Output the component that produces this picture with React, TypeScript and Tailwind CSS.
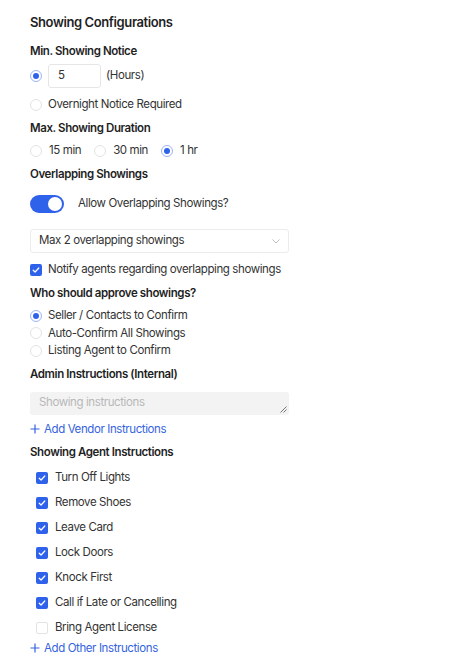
import { useState } from "react";

const font = { fontFamily: "Inter, 'Noto Sans', sans-serif" };

function Radio({ checked }: { checked: boolean }) {
  return checked ? (
    <span className="flex h-[12px] w-[12px] shrink-0 items-center justify-center rounded-full border border-[#9db3f5] bg-white">
      <span className="h-[6px] w-[6px] rounded-full bg-[#2f62eb]" />
    </span>
  ) : (
    <span className="h-[12px] w-[12px] shrink-0 rounded-full border border-[#e3e3e3] bg-white" />
  );
}

function Check({ checked }: { checked: boolean }) {
  return checked ? (
    <span className="flex h-[12px] w-[12px] shrink-0 items-center justify-center rounded-[2px] bg-[#2f62eb]">
      <svg width="8" height="8" viewBox="0 0 8 8" fill="none">
        <path d="M1.2 4.2 3.1 6 6.8 2" stroke="white" strokeWidth="1.2" strokeLinecap="round" strokeLinejoin="round" />
      </svg>
    </span>
  ) : (
    <span className="h-[12px] w-[12px] shrink-0 rounded-[2px] border border-[#e3e3e3] bg-white" />
  );
}

function Label({ children, className = "" }: { children: React.ReactNode; className?: string }) {
  return (
    <div className={`h-[16px] text-[11.5px] font-semibold leading-[16px] text-[#1f1f1f] ${className}`}>
      {children}
    </div>
  );
}

function AddLink({ text, className = "" }: { text: string; className?: string }) {
  return (
    <div className={`flex h-[16px] items-center gap-[4px] text-[11.5px] leading-[16px] text-[#3563e0] ${className}`}>
      <svg width="10" height="10" viewBox="0 0 10 10" fill="none">
        <path d="M5 0.5v9M0.5 5h9" stroke="#3563e0" strokeWidth="1.2" />
      </svg>
      <span>{text}</span>
    </div>
  );
}

const agentItems = [
  { label: "Turn Off Lights", checked: true },
  { label: "Remove Shoes", checked: true },
  { label: "Leave Card", checked: true },
  { label: "Lock Doors", checked: true },
  { label: "Knock First", checked: true },
  { label: "Call if Late or Cancelling", checked: true },
  { label: "Bring Agent License", checked: false },
];

export default function App() {
  const [duration] = useState("1 hr");
  const [approver] = useState("Seller / Contacts to Confirm");

  return (
    <div
      className="min-h-[665px] w-[474px] bg-white pl-[30px] pt-[12px] tracking-[-0.025em] text-[#333]"
      style={font}
    >
      <div className="h-[20px] text-[13px] font-semibold leading-[20px] text-[#1f1f1f]">
        Showing Configurations
      </div>

      <Label className="mt-[11px]">Min. Showing Notice</Label>
      <div className="mt-[5px] flex h-[24px] items-center">
        <Radio checked />
        <div className="ml-[6px] flex h-[24px] w-[53px] items-center rounded-[3px] border border-[#e6e6e6] pl-[9px] text-[11.5px]">
          5
        </div>
        <span className="ml-[5px] text-[11.5px]">(Hours)</span>
      </div>
      <div className="mt-[9px] flex h-[16px] items-center gap-[6px] text-[11.5px]">
        <Radio checked={false} />
        <span>Overnight Notice Required</span>
      </div>

      <Label className="mt-[7px]">Max. Showing Duration</Label>
      <div className="mt-[7px] flex h-[16px] items-center gap-[13px] text-[11.5px]">
        {["15 min", "30 min", "1 hr"].map((d) => (
          <div key={d} className="flex items-center gap-[7px]">
            <Radio checked={d === duration} />
            <span>{d}</span>
          </div>
        ))}
      </div>

      <Label className="mt-[7px]">Overlapping Showings</Label>
      <div className="mt-[13px] flex h-[18px] items-center">
        <span className="flex h-[18px] w-[34px] items-center justify-end rounded-full bg-[#2f62eb] px-[2px]">
          <span className="h-[14px] w-[14px] rounded-full bg-white" />
        </span>
        <span className="ml-[14px] text-[11.5px]">Allow Overlapping Showings?</span>
      </div>

      <div className="mt-[16px] flex h-[24px] w-[259px] items-center justify-between rounded-[3px] border border-[#ececec] pl-[8px] pr-[8px] text-[11.5px]">
        <span>Max 2 overlapping showings</span>
        <svg width="8" height="5" viewBox="0 0 8 5" fill="none">
          <path d="M0.5 0.5 4 4 7.5 0.5" stroke="#b5b5b5" strokeWidth="0.9" />
        </svg>
      </div>

      <div className="mt-[9px] flex h-[16px] items-center gap-[6px] text-[11.5px]">
        <Check checked />
        <span>Notify agents regarding overlapping showings</span>
      </div>

      <Label className="mt-[7px]">Who should approve showings?</Label>
      <div className="mt-[6px] flex flex-col text-[11.5px]">
        {["Seller / Contacts to Confirm", "Auto-Confirm All Showings", "Listing Agent to Confirm"].map((a) => (
          <div key={a} className="flex h-[17.5px] items-center gap-[6px]">
            <Radio checked={a === approver} />
            <span>{a}</span>
          </div>
        ))}
      </div>

      <Label className="mt-[6px]">Admin Instructions (Internal)</Label>
      <div className="relative mt-[10px] flex h-[23px] w-[259px] items-center rounded-[3px] bg-[#f3f3f3] pl-[9px] text-[11.5px] text-[#b8b8b8]">
        Showing instructions
        <svg className="absolute bottom-[2px] right-[2px]" width="7" height="7" viewBox="0 0 7 7" fill="none">
          <path d="M6.5 0.5 0.5 6.5M6.5 3.5 3.5 6.5" stroke="#555" strokeWidth="0.8" />
        </svg>
      </div>
      <AddLink text="Add Vendor Instructions" className="mt-[6px]" />

      <Label className="mt-[7px]">Showing Agent Instructions</Label>
      <div className="mt-[5.5px] flex flex-col pl-[6px] text-[11.5px]">
        {agentItems.map((item) => (
          <div key={item.label} className="flex h-[25px] items-center gap-[7px]">
            <Check checked={item.checked} />
            <span>{item.label}</span>
          </div>
        ))}
      </div>
      <AddLink text="Add Other Instructions" />
    </div>
  );
}
